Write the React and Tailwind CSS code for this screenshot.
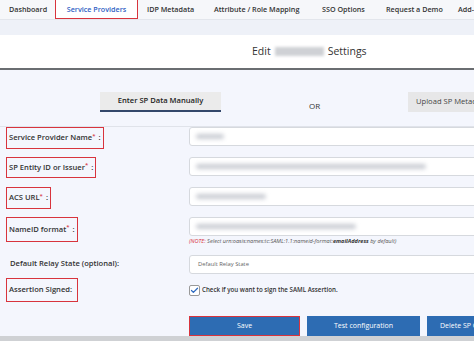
import { Check } from 'lucide-react'

const TABS = [
  { label: 'Dashboard', w: 'w-[55px] pl-[9px]' },
  { label: 'Service Providers', w: 'w-[83px] justify-center', active: true },
  { label: 'IDP Metadata', w: 'w-[66px] pl-[9px]' },
  { label: 'Attribute / Role Mapping', w: 'w-[108px] pl-[10px]' },
  { label: 'SSO Options', w: 'w-[64px] pl-[10px]' },
  { label: 'Request a Demo', w: 'w-[72px] pl-[10px]' },
  { label: 'Add-ons', w: 'w-[60px] pl-[10px]' },
]

function Blur({ w }) {
  return <span className="block h-[5px] rounded-sm bg-[#c9ccd3] blur-[2px]" style={{ width: w }} />
}

function Label({ children, req, boxed = true, className = '' }) {
  return (
    <span
      className={`flex items-center px-[2px] text-[7.6px] font-semibold text-[#333] whitespace-nowrap ${
        boxed ? 'border-[1.5px] border-[#d8343d]' : ''
      } ${className}`}
    >
      {children}
      {req && <span className="text-[#d8343d] text-[6px] -mt-1">*</span>}
      {req && <span className="ml-[3px]">:</span>}
    </span>
  )
}

function Field({ blur }) {
  return (
    <div className="shrink-0 w-[300px] h-[19px] rounded-[3px] border border-[#d6d9de] bg-white flex items-center px-[6px]">
      {blur && <Blur w={blur} />}
    </div>
  )
}

export default function App() {
  return (
    <div className="w-[474px] h-[341px] overflow-hidden bg-[#f4f6fd] font-['Open_Sans',sans-serif] flex flex-col">
      {/* top nav */}
      <div className="h-[20px] shrink-0 bg-[#f6f7fa] flex items-stretch text-[7.2px] font-semibold text-[#333] whitespace-nowrap border-b border-[#e3e6ec]">
        {TABS.map((t) => (
          <div
            key={t.label}
            className={`shrink-0 flex items-center ${t.w} ${
              t.active ? 'border-[1.5px] border-t-0 border-[#d8343d] bg-white text-[#2f5fc4]' : ''
            }`}
          >
            {t.label}
          </div>
        ))}
      </div>
      <div className="h-[15px] shrink-0 bg-[#eef1f8]" />

      {/* title */}
      <div className="h-[33px] shrink-0 bg-white flex items-center pl-[252px] gap-[4px] text-[10.5px] text-[#333]">
        <span>Edit</span>
        <span className="w-[49px] h-[9px] bg-[#cfd1d5] blur-[1.5px]" />
        <span>Settings</span>
      </div>
      <div className="h-[2px] shrink-0 bg-[#6a6d71]" />

      {/* mode switch */}
      <div className="shrink-0 flex items-start pt-[22px] pl-[100px] h-[57px] border-b border-[#e0e3ea]">
        <div className="shrink-0 w-[121px] h-[20px] bg-[#ebebeb] border-b-2 border-[#34486b] flex items-center justify-center text-[7.6px] font-semibold text-[#222]">
          Enter SP Data Manually
        </div>
        <div className="shrink-0 w-[187px] text-center text-[8px] text-[#333] pt-[8px]">OR</div>
        <div className="shrink-0 w-[110px] h-[20px] bg-[#e7e7e8] flex items-center pl-[8px] text-[7.6px] text-[#444] whitespace-nowrap">
          Upload SP Metadata
        </div>
      </div>

      {/* form */}
      <div className="flex flex-col pl-[6px]">
        <div className="flex items-start h-[30px]">
          <div className="shrink-0 w-[183px] flex"><Label req className="h-[22px]">Service Provider Name</Label></div>
          <Field blur={28} />
        </div>
        <div className="flex items-start h-[30px]">
          <div className="shrink-0 w-[183px] flex"><Label req className="h-[21px]">SP Entity ID or Issuer</Label></div>
          <Field blur={230} />
        </div>
        <div className="flex items-start h-[30px]">
          <div className="shrink-0 w-[183px] flex"><Label req className="h-[22px]">ACS URL</Label></div>
          <Field blur={70} />
        </div>
        <div className="flex items-start h-[37px]">
          <div className="shrink-0 w-[183px] flex"><Label req className="h-[25px] w-[72px]">NameID format</Label></div>
          <div className="shrink-0 flex flex-col">
            <Field blur={160} />
            <div className="mt-[1px] text-[5.6px] italic text-[#555] whitespace-nowrap">
              <span className="text-[#d8343d]">(NOTE:</span> Select urn:oasis:names:tc:SAML:1.1:nameid-format:
              <b className="text-[#333]">emailAddress</b> by default)
            </div>
          </div>
        </div>
        <div className="flex items-center h-[20px]">
          <div className="shrink-0 w-[183px] pl-[2px] flex"><Label boxed={false} className="px-0">Default Relay State (optional):</Label></div>
          <div className="shrink-0 w-[300px] h-[19px] rounded-[3px] border border-[#d6d9de] bg-white flex items-center px-[8px] text-[5.8px] text-[#666]">
            Default Relay State
          </div>
        </div>
        <div className="flex items-center h-[24px] mt-[4px]">
          <div className="shrink-0 w-[183px] flex"><Label className="h-[24px] w-[72px]">Assertion Signed:</Label></div>
          <div className="flex items-center gap-[2px] text-[6.2px] font-semibold text-[#333] whitespace-nowrap">
            <span className="w-[11px] h-[11px] rounded-[2px] border border-[#999] bg-white flex items-center justify-center">
              <Check size={9} strokeWidth={3.5} className="text-[#2f6bc1]" />
            </span>
            Check if you want to sign the SAML Assertion.
          </div>
        </div>
        <div className="flex items-center gap-[7px] mt-[14px] pl-[183px] text-[7px] text-white whitespace-nowrap">
          <div className="shrink-0 w-[111px] h-[20px] bg-[#2d6cb3] border-[1.5px] border-[#d8343d] flex items-center justify-center">Save</div>
          <div className="shrink-0 w-[113px] h-[20px] bg-[#2d6cb3] flex items-center justify-center">Test configuration</div>
          <div className="shrink-0 w-[100px] h-[20px] bg-[#2d6cb3] flex items-center pl-[13px]">Delete SP Configuration</div>
        </div>
      </div>
      <div className="mt-auto h-[5px] shrink-0 bg-[#cfd1d4]" />
    </div>
  )
}
